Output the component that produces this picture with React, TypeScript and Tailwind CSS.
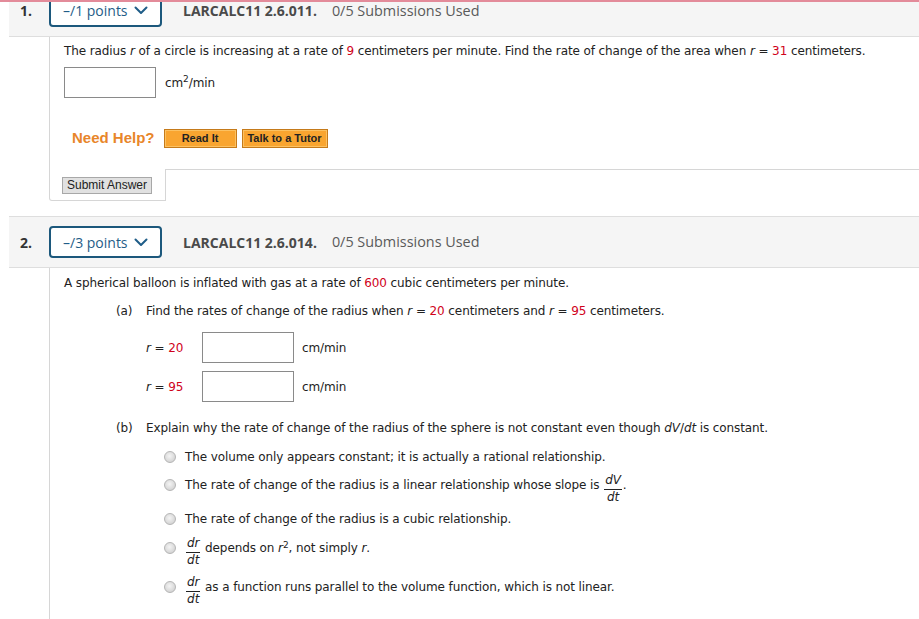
import React from "react";

const body = "font-['DejaVu_Sans',sans-serif] text-[12px] tracking-[-0.1px] text-[#222]";
const openSans = "font-['Open_Sans',sans-serif] tracking-normal";

function Red({ children }: { children: React.ReactNode }) {
  return <span className="text-[#d0021b]">{children}</span>;
}

function I({ children }: { children: React.ReactNode }) {
  return <span className="italic">{children}</span>;
}

function Frac({ top, bottom }: { top: string; bottom: string }) {
  return (
    <span className="inline-flex flex-col items-center translate-y-[4px] mx-[1px] shrink-0">
      <span className="italic text-[12px] leading-[13px] px-[1px] border-b border-[#222] pb-[2px]">{top}</span>
      <span className="italic text-[12px] leading-[13px] pt-[1px]">{bottom}</span>
    </span>
  );
}

function Chevron() {
  return (
    <svg width="14" height="9" viewBox="0 0 14 9" className="ml-[6px]">
      <path d="M1.5 1.5 L7 7 L12.5 1.5" fill="none" stroke="#1f5d88" strokeWidth="2" strokeLinecap="round" strokeLinejoin="round" />
    </svg>
  );
}

function Header({ num, pts, code, top }: { num: string; pts: string; code: string; top?: boolean }) {
  return (
    <div className={`ml-[9px] h-[52px] bg-[#f5f5f5] border-b border-[#dedede] ${top ? "" : "border-t"} flex items-center ${openSans}`}>
      <div className="w-[40px] text-[14px] font-bold text-[#333] pl-[11px]">{num}</div>
      <div className="w-[113px] h-[32px] border-2 border-[#1c587c] rounded-[4px] bg-white flex items-center pl-[12px] text-[14px] text-[#1f5d88]">
        {pts}
        <Chevron />
      </div>
      <div className="ml-[21px] text-[14px] font-bold text-[#4a4a4a]">{code}</div>
      <div className="ml-[15px] text-[14.4px] text-[#5a5a5a]">0/5 Submissions Used</div>
    </div>
  );
}

function Input() {
  return <div className="w-[92px] h-[31px] border border-[#8a8a8a] bg-white shrink-0" />;
}

function Radio() {
  return (
    <span className="inline-block w-[12px] h-[12px] rounded-full border border-[#b5b5b5] bg-[radial-gradient(circle_at_45%_40%,#f4f4f4,#c9c9c9)] shrink-0" />
  );
}

function HelpBtn({ label, w }: { label: string; w: number }) {
  return (
    <div
      className="h-[19px] border border-[#c57a1a] bg-[#f9a530] flex items-center justify-center font-['Liberation_Sans',sans-serif] tracking-normal font-bold text-[11px] text-[#222] shadow-[inset_0_0_0_1px_#fcc161]"
      style={{ width: w }}
    >
      {label}
    </div>
  );
}

export default function App() {
  return (
    <div className={`relative w-[919px] h-[619px] overflow-hidden bg-white ${body}`}>
      <div className="absolute top-0 left-0 right-0 h-[2px] bg-[#e38b9a] z-10" />
      <div className="-mt-[15px]">
        {/* Question 1 */}
        <Header num="1." pts="–/1 points" code="LARCALC11 2.6.011." top />
        <div className="ml-[49px]">
          <div className="border-l border-[#d6d6d6] pl-[14px] pt-[6px]">
            <div className="leading-[16px]">
              The radius <I>r</I> of a circle is increasing at a rate of <Red>9</Red> centimeters per minute. Find the rate of change of the area when <I>r</I> = <Red>31</Red> centimeters.
            </div>
            <div className="flex items-center mt-[8px]">
              <Input />
              <span className="ml-[9px]">
                cm<sup className="text-[9px]">2</sup>/min
              </span>
            </div>
            <div className="flex items-center mt-[30px] pl-[8px] h-[20px]">
              <span className="font-['Liberation_Sans',sans-serif] tracking-normal font-bold text-[15px] text-[#e8862a] mr-[9px]">Need Help?</span>
              <HelpBtn label="Read It" w={73} />
              <span className="w-[5px]" />
              <HelpBtn label="Talk to a Tutor" w={86} />
            </div>
            <div className="h-[21px]" />
          </div>
          <div className="flex">
            <div className="w-[117px] h-[32px] border-l border-b border-r border-[#d6d6d6] rounded-bl-[3px] flex items-start pl-[12px] pt-[8px]">
              <div className="h-[17px] px-[4px] border border-[#a8a8a8] bg-[#e1e1e1] font-['Liberation_Sans',sans-serif] tracking-normal text-[12px] leading-[15px] text-[#222]">
                Submit Answer
              </div>
            </div>
            <div className="flex-1 border-t border-[#d6d6d6]" />
          </div>
        </div>

        <div className="h-[15px]" />

        {/* Question 2 */}
        <Header num="2." pts="–/3 points" code="LARCALC11 2.6.014." />
        <div className="ml-[49px] border-l border-[#d6d6d6] pl-[14px] pt-[7px] h-[400px]">
          <div className="leading-[16px]">
            A spherical balloon is inflated with gas at a rate of <Red>600</Red> cubic centimeters per minute.
          </div>
          <div className="flex mt-[12px] leading-[16px] pl-[52px]">
            <span className="w-[30px]">(a)</span>
            <span>
              Find the rates of change of the radius when <I>r</I> = <Red>20</Red> centimeters and <I>r</I> = <Red>95</Red> centimeters.
            </span>
          </div>
          <div className="pl-[82px] mt-[13px]">
            <div className="flex items-center">
              <span className="w-[56px]">
                <I>r</I> = <Red>20</Red>
              </span>
              <Input />
              <span className="ml-[8px]">cm/min</span>
            </div>
            <div className="flex items-center mt-[8px]">
              <span className="w-[56px]">
                <I>r</I> = <Red>95</Red>
              </span>
              <Input />
              <span className="ml-[8px]">cm/min</span>
            </div>
          </div>
          <div className="flex mt-[18px] leading-[16px] pl-[52px]">
            <span className="w-[30px]">(b)</span>
            <span>
              Explain why the rate of change of the radius of the sphere is not constant even though <I>dV</I>/<I>dt</I> is constant.
            </span>
          </div>
          <div className="pl-[100px] mt-[13px] flex flex-col">
            <div className="flex items-center gap-[9px] h-[16px]">
              <Radio />
              <span>The volume only appears constant; it is actually a rational relationship.</span>
            </div>
            <div className="flex items-center gap-[9px] mt-[12px] h-[16px]">
              <Radio />
              <span className="flex items-center h-[16px]">
                <span>The rate of change of the radius is a linear relationship whose slope is&nbsp;</span>
                <Frac top="dV" bottom="dt" />
                <span>.</span>
              </span>
            </div>
            <div className="flex items-center gap-[9px] mt-[18px] h-[16px]">
              <Radio />
              <span>The rate of change of the radius is a cubic relationship.</span>
            </div>
            <div className="flex items-center gap-[9px] mt-[13px] h-[16px]">
              <Radio />
              <span className="flex items-center h-[16px]">
                <Frac top="dr" bottom="dt" />
                <span>
                  &nbsp;depends on <I>r</I>
                  <sup className="text-[9px]">2</sup>, not simply <I>r</I>.
                </span>
              </span>
            </div>
            <div className="flex items-center gap-[9px] mt-[23px] h-[16px]">
              <Radio />
              <span className="flex items-center h-[16px]">
                <Frac top="dr" bottom="dt" />
                <span>&nbsp;as a function runs parallel to the volume function, which is not linear.</span>
              </span>
            </div>
          </div>
        </div>
      </div>
    </div>
  );
}
